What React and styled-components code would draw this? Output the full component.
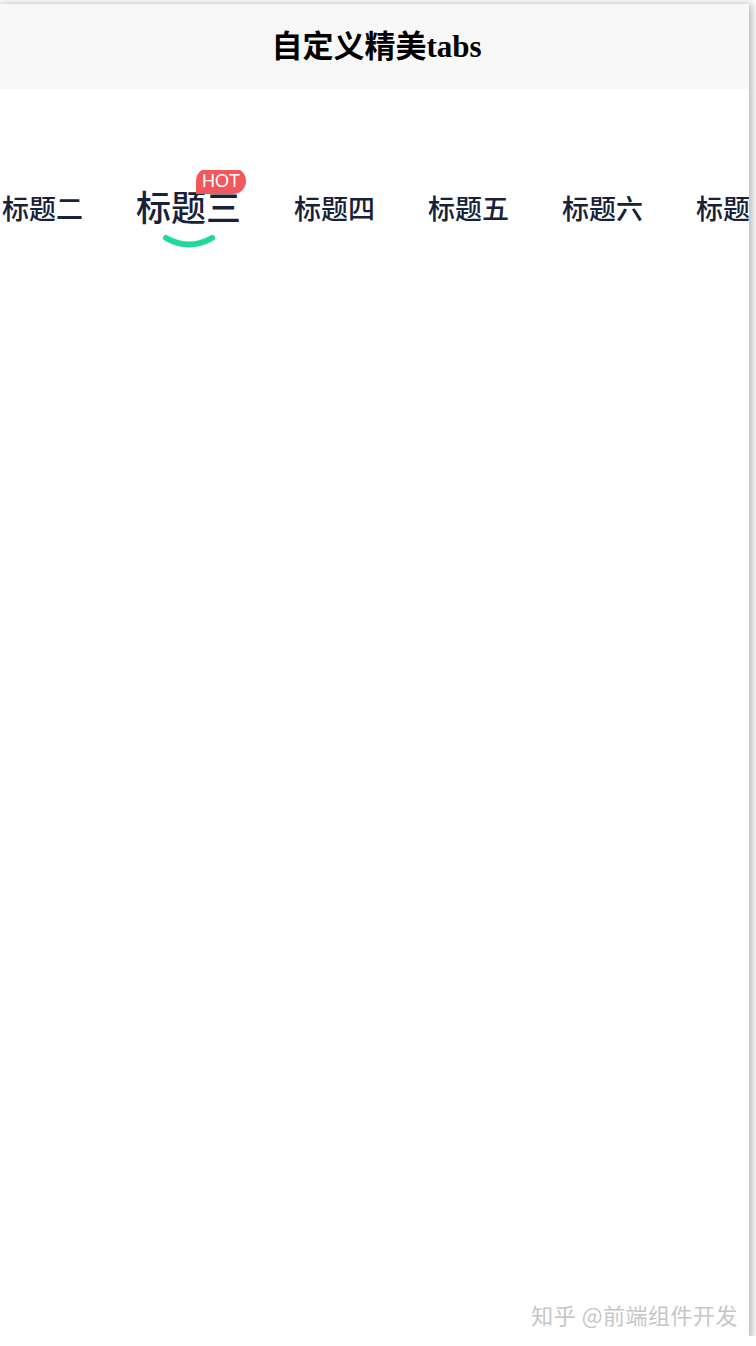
import React, { useLayoutEffect, useRef, useState } from 'react';
import styled, { createGlobalStyle } from 'styled-components';

const GlobalStyle = createGlobalStyle`
    html, body {
        margin: 0;
        padding: 0;
        background: #ffffff;
    }
    body {
        font-family: "Liberation Serif", "Noto Sans CJK SC", serif;
    }
`

const Frame = styled.div`
    position: relative;
    width: 749px;
    height: 1332px;
    margin-top: 4px;
    background: #ffffff;
    box-shadow: 1px 2px 8px 2px rgba(0, 0, 0, 0.3);
    display: flex;
    flex-direction: column;
    overflow: hidden;
`

const Header = styled.div`
    height: 85px;
    flex-shrink: 0;
    background: #f8f8f8;
    display: flex;
    align-items: center;
    justify-content: center;
    padding-bottom: 6px;
    box-sizing: border-box;
`

const Title = styled.h1`
    margin: 0;
    padding-left: 4px;
    font-size: 31px;
    font-weight: 700;
    color: #000000;
    font-family: "Liberation Serif", "Noto Sans CJK SC", serif;
`

const TabsBar = styled.div`
    margin-top: 81px;
    height: 90px;
    overflow-x: auto;
    overflow-y: hidden;
    scrollbar-width: none;

    &::-webkit-scrollbar {
        display: none;
    }
`

const TabsRow = styled.div`
    display: flex;
    align-items: flex-start;
    gap: 53px;
    width: max-content;
    padding-top: 20px;
`

const TabItem = styled.div`
    position: relative;
    height: 40px;
    display: flex;
    align-items: center;
    white-space: nowrap;
    font-size: ${({ active }) => (active ? '35px' : '27px')};
    font-weight: 500;
    line-height: 40px;
    color: #18213a;
    cursor: pointer;
`

const HotBadge = styled.span`
    position: absolute;
    left: 60px;
    top: -22px;
    width: 50px;
    height: 26px;
    border-radius: 13px 13px 13px 0;
    background: #f2575b;
    color: #ffffff;
    font-family: "Liberation Sans", Arial, sans-serif;
    font-weight: 400;
    font-size: 18px;
    line-height: 26px;
    text-align: center;
`

const Smile = styled.svg`
    position: absolute;
    left: 50%;
    top: 100%;
    margin-left: -27px;
    margin-top: 4px;
    width: 54px;
    height: 16px;
`

const Watermark = styled.div`
    position: absolute;
    right: 11px;
    bottom: 8px;
    font-family: "Noto Sans CJK SC", "Noto Sans", sans-serif;
    font-size: 22px;
    line-height: 28px;
    color: #c6c6c6;
    letter-spacing: 0.5px;
`

const tabs = [
    { label: '标题一' },
    { label: '标题二' },
    { label: '标题三', hot: true },
    { label: '标题四' },
    { label: '标题五' },
    { label: '标题六' },
    { label: '标题七' },
    { label: '标题八' },
]

export default function App() {
    const [current, setCurrent] = useState(2);
    const barRef = useRef(null);

    useLayoutEffect(() => {
        if (barRef.current) barRef.current.scrollLeft = 132;
    }, []);

    return (
        <>
            <GlobalStyle />
            <Frame>
                <Header>
                    <Title>自定义精美tabs</Title>
                </Header>
                <TabsBar ref={barRef}>
                    <TabsRow>
                        {tabs.map((tab, i) => (
                            <TabItem key={tab.label} active={i === current} onClick={() => setCurrent(i)}>
                                {tab.label}
                                {tab.hot && <HotBadge>HOT</HotBadge>}
                                {i === current && (
                                    <Smile viewBox="0 0 54 16">
                                        <path d="M4 4 Q27 17 50 4" fill="none" stroke="#1ed99b" strokeWidth="6" strokeLinecap="round" />
                                    </Smile>
                                )}
                            </TabItem>
                        ))}
                    </TabsRow>
                </TabsBar>
                <Watermark>知乎 @前端组件开发</Watermark>
            </Frame>
        </>
    )
}
